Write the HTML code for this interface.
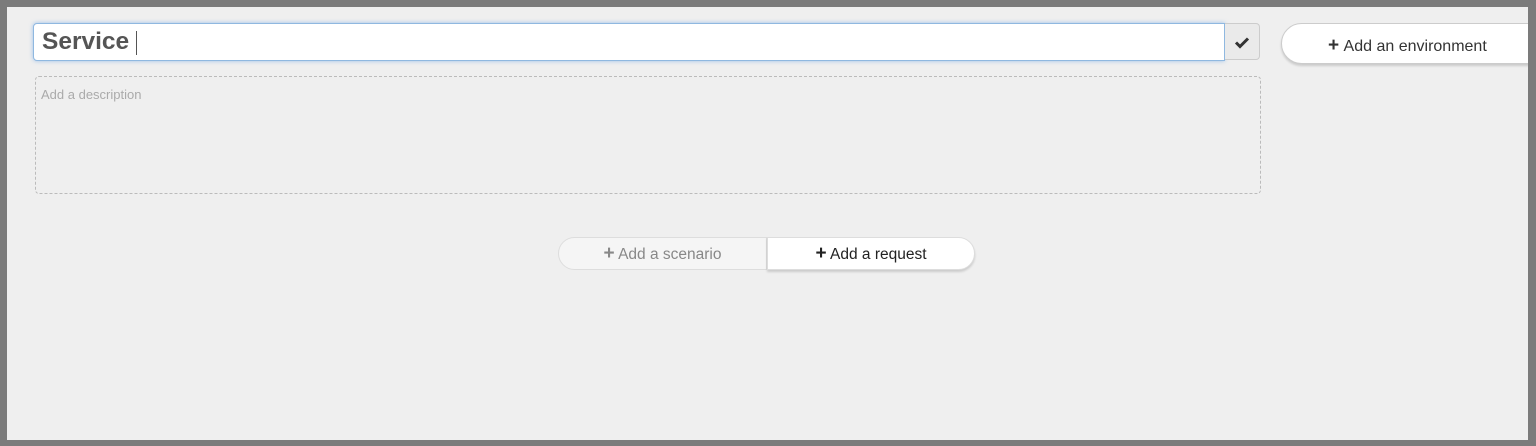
<!DOCTYPE html>
<html><head><style>
html,body{margin:0;padding:0}
body{width:1536px;height:446px;background:#7b7b7b;position:relative;overflow:hidden;font-family:"Liberation Sans",Arial,sans-serif}
.main{position:absolute;left:7px;top:7px;width:1521px;height:433px;background:#efefef;overflow:hidden}
.inp{position:absolute;left:26px;top:16px;width:1190px;height:36px;background:#fff;border:1px solid #8fb8e0;border-radius:4px 0 0 4px;box-shadow:0 0 4px rgba(100,160,230,.6)}
.inp span{position:absolute;left:8px;top:4px;font-size:24.5px;font-weight:bold;color:#555}
.inp i{position:absolute;left:102px;top:7px;width:1px;height:24px;background:#555}
.chk{position:absolute;left:1218px;top:16px;width:35px;height:37px;background:#eaeaea;border:1px solid #ccc;border-left:none;border-radius:0 4px 4px 0;box-sizing:border-box}
.desc{position:absolute;left:28px;top:69px;width:1226px;height:118px;border:1px dashed #bbb;border-radius:4px;box-sizing:border-box}
.desc span{position:absolute;left:5px;top:10px;font-size:13px;color:#aaa}
.env{position:absolute;left:1274px;top:16px;width:270px;height:41px;background:#fff;border:1px solid #ccc;border-radius:21px;box-shadow:0 2px 2px rgba(0,0,0,.15);box-sizing:border-box;font-size:16px;color:#333}
.env span{position:absolute;left:46px;top:11px}
.seg{position:absolute;top:230px;height:33px;box-sizing:border-box;border:1px solid #ddd;font-size:15.5px;text-align:center;line-height:31px}
.p{font-weight:bold;font-size:19px}
</style></head><body>
<div class="main">
<div class="inp"><span>Service</span><i></i></div>
<div class="chk"><svg width="35" height="37" viewBox="0 0 35 37"><path d="M11 18.5l4 4 8-8" fill="none" stroke="#333" stroke-width="3"/></svg></div>
<div class="desc"><span>Add a description</span></div>
<div class="env"><span><b class="p" style="font-size:19px">+</b>&nbsp;Add an environment</span></div>
<div class="seg" style="left:551px;width:209px;background:#f5f5f5;color:#888;border-radius:17px 0 0 17px"><b class="p">+</b> Add a scenario</div>
<div class="seg" style="left:760px;width:208px;background:#fff;color:#222;border-radius:0 17px 17px 0;box-shadow:0 2px 2px rgba(0,0,0,.15)"><b class="p">+</b> Add a request</div>
</div>
</body></html>
